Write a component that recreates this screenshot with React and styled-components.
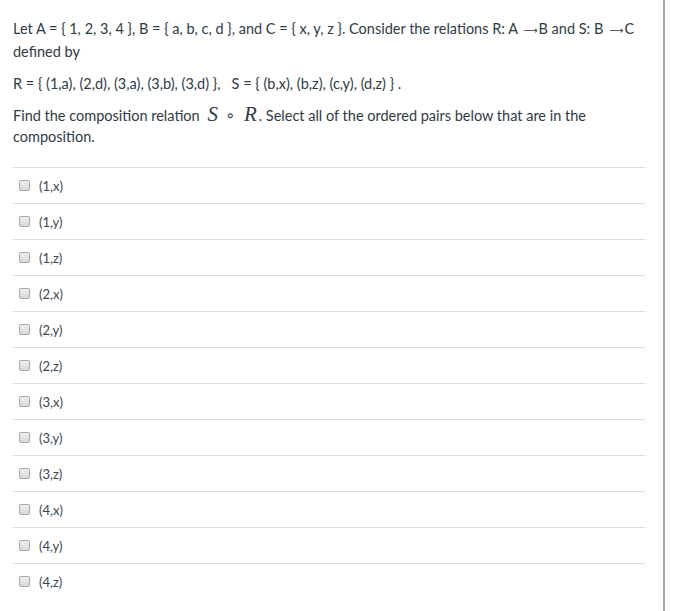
import React from 'react';
import styled, { createGlobalStyle } from 'styled-components';

const GlobalStyle = createGlobalStyle`
  html, body {
    margin: 0;
    padding: 0;
    background: #fff;
  }
  body {
    font-family: Lato, "Open Sans", sans-serif;
    color: #2d3b45;
  }
`;

const Page = styled.div`
  width: 676px;
  height: 611px;
  display: flex;
  box-sizing: border-box;
  overflow: hidden;
`;

const Question = styled.div`
  width: 665px;
  padding: 18px 18px 0 13px;
  box-sizing: border-box;
  border-right: 2px solid #a8a8a8;
`;

const Text = styled.p`
  margin: 0 0 11px;
  font-size: 14.5px;
  line-height: 21px;
`;

const Arrow = styled.span`
  font-family: "DejaVu Sans", sans-serif;
  font-size: 10px;
  margin: 0 1px 0 2px;
`;

const Math = styled.span`
  font-family: "Liberation Serif", serif;
  font-style: italic;
  font-size: 21px;
  line-height: 0;
  margin: 0 2px 0 4px;
`;

const Compose = styled.span`
  font-family: "DejaVu Sans", sans-serif;
  font-size: 16px;
  line-height: 0;
  margin: 0 5px;
`;

const Answers = styled.div`
  margin-top: 20px;
`;

const Row = styled.label`
  display: flex;
  align-items: center;
  gap: 9px;
  height: 35px;
  padding-left: 6px;
  border-top: 1px solid #dcdcdc;
  font-size: 13px;
  color: #3a4650;
`;

const Box = styled.span`
  width: 9px;
  height: 9px;
  border: 1px solid #a9a9a9;
  border-radius: 2px;
  background: linear-gradient(#f0f0f0, #d8d8d8);
`;

const pairs = ['(1,x)', '(1,y)', '(1,z)', '(2,x)', '(2,y)', '(2,z)', '(3,x)', '(3,y)', '(3,z)', '(4,x)', '(4,y)', '(4,z)'];

export default function App() {
  return (
    <Page>
      <GlobalStyle />
      <Question>
        <Text>
          Let A = {'{'} 1, 2, 3, 4 {'}'}, B = {'{'} a, b, c, d {'}'}, and C = {'{'} x, y, z {'}'}. Consider the relations R: A <Arrow>⟶</Arrow>B and S: B <Arrow>⟶</Arrow>C defined by
        </Text>
        <Text>
          R = {'{'} (1,a), (2,d), (3,a), (3,b), (3,d) {'}'},&nbsp;&nbsp; S = {'{'} (b,x), (b,z), (c,y), (d,z) {'}'} .
        </Text>
        <Text>
          Find the composition relation <Math>S</Math><Compose>∘</Compose><Math>R</Math>. Select all of the ordered pairs below that are in the composition.
        </Text>
        <Answers>
          {pairs.map(p => (
            <Row key={p}>
              <Box />
              {p}
            </Row>
          ))}
        </Answers>
      </Question>
    </Page>
  );
}
